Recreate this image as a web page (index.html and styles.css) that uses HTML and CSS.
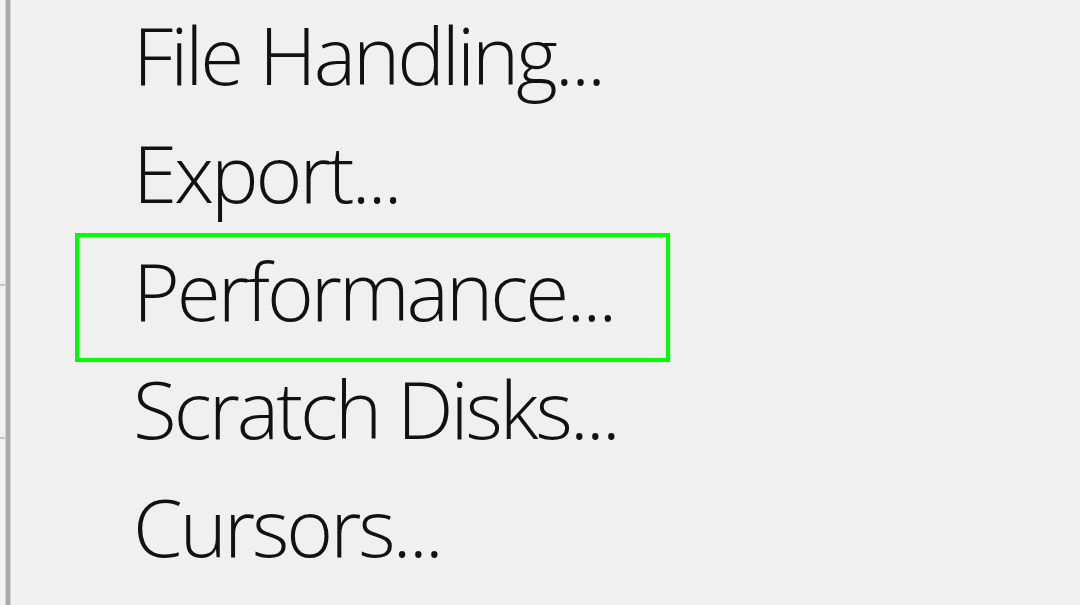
FILE: index.html
```html
<!DOCTYPE html>
<html>
<head>
  <title>Preferences Menu</title>
  <link rel="stylesheet" href="styles.css">
</head>
<body>
  <div class="frame">
    <div class="edge">
      <div class="tick tick-1"></div>
      <div class="tick tick-2"></div>
    </div>
    <div class="rule"></div>

    <ul class="menu">
      <li class="menu-item">File Handling...</li>
      <li class="menu-item">Export...</li>
      <li class="menu-item highlighted">Performance...</li>
      <li class="menu-item">Scratch Disks...</li>
      <li class="menu-item">Cursors...</li>
    </ul>
  </div>
</body>
</html>
```

FILE: styles.css
```css
body { margin: 0; background: #f0f0f0; font-family: "Open Sans", "Noto Sans", sans-serif; color: #111; }
.frame { display: flex; width: 1080px; height: 605px; overflow: hidden; }
.edge { width: 6px; display: flex; flex-direction: column; }
.tick { height: 2px; background: #c8c8c8; }
.tick-1 { margin-top: 284px; }
.tick-2 { margin-top: 151px; }
.rule { width: 4px; background: #a8a8a8; box-shadow: 1px 0 0 #d4d4d4, -1px 0 0 #d4d4d4; }
.menu { list-style: none; margin: 0; padding: 3px 0 0 123px; width: 800px; }
.menu-item { font-size: 80px; font-weight: 300; letter-spacing: -3px; line-height: 102px; height: 118px; white-space: nowrap; position: relative; }
.highlighted::after { content: ""; position: absolute; top: -6px; height: 121px; left: -58px; width: 587px; border: 4px solid #00ff00; }
```
